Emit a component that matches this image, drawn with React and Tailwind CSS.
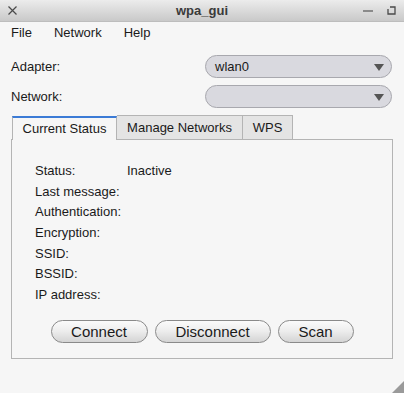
import React from 'react';

const font = { fontFamily: '"Liberation Sans", Arial, sans-serif' };

function Combo({ value }) {
    return (
        <div className="relative h-[23px] w-[187px] rounded-full border border-[#a8a8ae] bg-[#d9d9df] pl-[9px] text-[13px] leading-[21px] text-[#1a1a1a]">
            {value}
            <svg className="absolute right-[7px] top-[8px]" width="10" height="7" viewBox="0 0 10 7">
                <path d="M0 0 H10 L5 7 Z" fill="#555" />
            </svg>
        </div>
    );
}

function Button({ children, width }) {
    return (
        <button className={`h-[23px] ${width} rounded-full border border-[#8a8a8a] bg-gradient-to-b from-[#fbfbfb] via-[#ececec] to-[#d4d4d4] text-[15px] leading-[21px] text-[#1a1a1a]`}>
            {children}
        </button>
    );
}

const rows = [
    ['Status:', 'Inactive'],
    ['Last message:', ''],
    ['Authentication:', ''],
    ['Encryption:', ''],
    ['SSID:', ''],
    ['BSSID:', ''],
    ['IP address:', ''],
];

export default function App() {
    return (
        <div className="relative flex h-[393px] w-[404px] flex-col overflow-hidden bg-[#f6f6f6] text-[#1a1a1a]" style={font}>
            {/* title bar */}
            <div className="relative flex h-[22px] shrink-0 items-center justify-center bg-gradient-to-b from-[#ececec] to-[#c9c9c9] border-b border-[#bdbdbd]">
                <svg className="absolute left-[8px] top-[6px]" width="9" height="9" viewBox="0 0 9 9">
                    <path d="M0.5 0.5 L8.5 8.5 M8.5 0.5 L0.5 8.5" stroke="#4a4a4a" strokeWidth="1.2" />
                </svg>
                <span className="text-[13px] font-bold text-[#3a3a3a]">wpa_gui</span>
                <div className="absolute left-[363px] top-[10px] h-[2px] w-[10px] bg-[#8a8a8a]" />
                <svg className="absolute left-[387px] top-[6px]" width="9" height="9" viewBox="0 0 9 9">
                    <path d="M3 1 H8 V8 H1 V3" fill="none" stroke="#4a4a4a" strokeWidth="1.3" />
                </svg>
            </div>

            {/* menu bar */}
            <div className="flex h-[21px] shrink-0 items-center pl-[11px] text-[13px]">
                <span className="mr-[22px]">File</span>
                <span className="mr-[22px]">Network</span>
                <span>Help</span>
            </div>

            <div className="flex flex-col px-[11px] pt-[12px]">
                <div className="flex h-[23px] items-center justify-between pr-[1px]">
                    <span className="text-[13px]">Adapter:</span>
                    <Combo value="wlan0" />
                </div>
                <div className="mt-[7px] flex h-[23px] items-center justify-between pr-[1px]">
                    <span className="text-[13px]">Network:</span>
                    <Combo value="" />
                </div>

                {/* tabs */}
                <div className="mt-[7px] flex h-[24px] items-end pl-[1px] text-[13px]">
                    <div className="relative z-10 flex h-[24px] w-[105px] items-center justify-center border-l border-r border-[#b4b4b4] bg-[#f6f6f6] border-t-2 border-t-[#3b7bd6] -mb-[1px] pb-[1px]">
                        Current Status
                    </div>
                    <div className="flex h-[24px] w-[126px] items-center justify-center border-t border-r border-[#b4b4b4] bg-[#e4e4e4]">
                        Manage Networks
                    </div>
                    <div className="flex h-[24px] w-[50px] items-center justify-center border-t border-r border-[#b4b4b4] bg-[#e4e4e4]">
                        WPS
                    </div>
                </div>

                {/* panel */}
                <div className="flex h-[220px] w-[382px] flex-col border border-[#b4b4b4] bg-[#f6f6f6] pl-[23px] pt-[21px]">
                    <div className="flex flex-col text-[13px] leading-[20.67px]">
                        {rows.map(([label, value]) => (
                            <div key={label} className="flex">
                                <span className="w-[92px]">{label}</span>
                                <span>{value}</span>
                            </div>
                        ))}
                    </div>
                    <div className="-ml-[23px] mt-[14px] flex justify-center gap-[7px]">
                        <Button width="w-[97px]">Connect</Button>
                        <Button width="w-[116px]">Disconnect</Button>
                        <Button width="w-[76px]">Scan</Button>
                    </div>
                </div>
            </div>

            {/* resize grip */}
            <svg className="absolute bottom-0 right-0" width="12" height="12" viewBox="0 0 12 12">
                <path d="M12 0 L12 12 L0 12 Z" fill="#9a9a9a" />
            </svg>
        </div>
    );
}
